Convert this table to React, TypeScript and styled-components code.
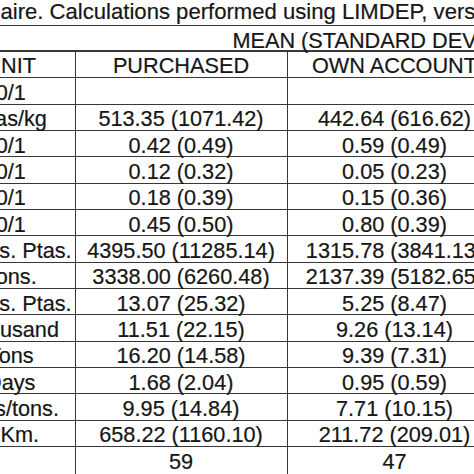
import React from "react";
import styled, { createGlobalStyle } from "styled-components";

const GlobalStyle = createGlobalStyle`
  html, body {
    margin: 0;
    padding: 0;
    background: #ffffff;
  }
  body {
    font-family: "Liberation Sans", Arial, Helvetica, sans-serif;
    color: #161616;
  }
`;

const fontSize = 21.7;
const rowHeight = 26.35;
const lineColor = "#383838";

interface Row {
  unit: string;
  purchased: string;
  own: string;
}

const rows: Row[] = [
  { unit: "0/1", purchased: "", own: "" },
  { unit: "Ptas/kg", purchased: "513.35 (1071.42)", own: "442.64 (616.62)" },
  { unit: "0/1", purchased: "0.42 (0.49)", own: "0.59 (0.49)" },
  { unit: "0/1", purchased: "0.12 (0.32)", own: "0.05 (0.23)" },
  { unit: "0/1", purchased: "0.18 (0.39)", own: "0.15 (0.36)" },
  { unit: "0/1", purchased: "0.45 (0.50)", own: "0.80 (0.39)" },
  { unit: "Thous. Ptas.", purchased: "4395.50 (11285.14)", own: "1315.78 (3841.13)" },
  { unit: "Tons.", purchased: "3338.00 (6260.48)", own: "2137.39 (5182.65)" },
  { unit: "Thous. Ptas.", purchased: "13.07 (25.32)", own: "5.25 (8.47)" },
  { unit: "Thousand", purchased: "11.51 (22.15)", own: "9.26 (13.14)" },
  { unit: "Tons", purchased: "16.20 (14.58)", own: "9.39 (7.31)" },
  { unit: "Days", purchased: "1.68 (2.04)", own: "0.95 (0.59)" },
  { unit: "Ptas/tons.", purchased: "9.95 (14.84)", own: "7.71 (10.15)" },
  { unit: "\u00a0\u00a0\u00a0Km.", purchased: "658.22 (1160.10)", own: "211.72 (209.01)" },
  { unit: "", purchased: "59", own: "47" },
];

export default function App() {
  return (
    <>
      <GlobalStyle />
      <Page>
        <Caption>
          <CaptionText>
            Source: Questionnaire. Calculations performed using LIMDEP, version 7.0
          </CaptionText>
        </Caption>
        <Table>
          <MeanRow>
            <MeanCell />
            <MeanCell>MEAN (STANDARD DEVIATION)</MeanCell>
          </MeanRow>
          <TableRow>
            <Cell divider>UNIT</Cell>
            <Cell divider>PURCHASED</Cell>
            <Cell>OWN ACCOUNT</Cell>
          </TableRow>
          {rows.map((r, i) => (
            <TableRow key={i} last={i === rows.length - 1}>
              <Cell divider data>{r.unit}</Cell>
              <Cell divider data>{r.purchased}</Cell>
              <Cell data>{r.own}</Cell>
            </TableRow>
          ))}
        </Table>
      </Page>
    </>
  );
}

const Page = styled.div`
  width: 474px;
  height: 474px;
  overflow: hidden;
  background: #ffffff;
  font-size: ${fontSize}px;
  -webkit-text-stroke: 0.2px #161616;
`;

const Caption = styled.div`
  box-sizing: border-box;
  height: 25.5px;
  border-bottom: 1.5px solid ${lineColor};
  overflow: hidden;
  white-space: nowrap;
`;

const CaptionText = styled.div`
  margin-left: -182.5px;
  font-size: 22.1px;
  line-height: 24px;
`;

const Table = styled.div`
  margin-left: -53px;
  width: 765px;
`;

const MeanRow = styled.div`
  box-sizing: border-box;
  height: 26.5px;
  display: grid;
  grid-template-columns: 128.5px 636px;
  border-bottom: 2.5px solid ${lineColor};
`;

const MeanCell = styled.div`
  text-align: center;
  white-space: nowrap;
  line-height: 26px;
  padding-top: 2px;
`;

const TableRow = styled.div<{ last?: boolean }>`
  box-sizing: border-box;
  height: ${rowHeight}px;
  display: grid;
  grid-template-columns: 128.5px 212px 214px;
  border-bottom: ${(p) => (p.last ? "none" : `1.5px solid ${lineColor}`)};
`;

const Cell = styled.div<{ divider?: boolean; data?: boolean }>`
  box-sizing: border-box;
  text-align: center;
  white-space: nowrap;
  line-height: 26px;
  padding-top: ${(p) => (p.data ? 1.5 : 1)}px;
  border-right: ${(p) => (p.divider ? `1.5px solid ${lineColor}` : "none")};
  height: ${rowHeight}px;
  margin-bottom: -1.5px;
`;
